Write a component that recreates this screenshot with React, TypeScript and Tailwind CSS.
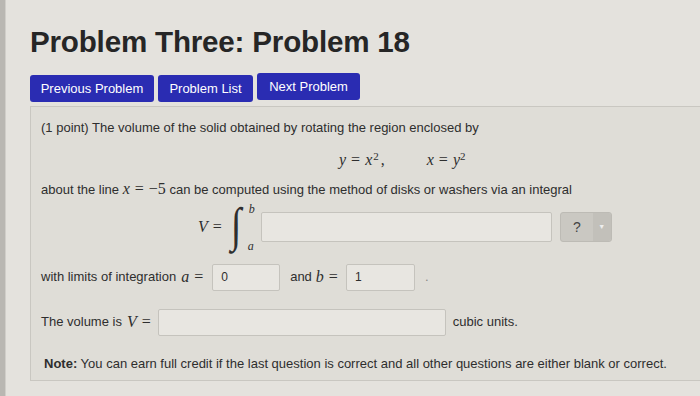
import React from "react";

const serif = { fontFamily: '"Liberation Serif", "Times New Roman", serif' };

function M({ children }: { children: React.ReactNode }) {
  return (
    <span className="italic text-[16px]" style={serif}>
      {children}
    </span>
  );
}

function Eq() {
  return (
    <span className="text-[16px] mx-[5px]" style={serif}>
      =
    </span>
  );
}

export default function App() {
  return (
    <div
      className="w-[700px] h-[396px] overflow-hidden flex bg-[#e4e2dd] text-[#2b2b2b]"
      style={{ fontFamily: '"Liberation Sans", Arial, sans-serif' }}
    >
      <div className="w-[6px] h-full bg-[#b9b7b2] border-r border-[#d0cec9]" />
      <div className="flex-1 flex flex-col pl-[24px] pt-[24px]">
        <h1 className="text-[29.6px] font-bold leading-[36px] text-[#262626] tracking-[-0.2px]">
          Problem Three: Problem 18
        </h1>
        <div className="flex gap-[4px] mt-[15px]">
          <button className="h-[27px] w-[124px] rounded-[3px] bg-[#2a2cb2] text-white text-[13px]">
            Previous Problem
          </button>
          <button className="h-[27px] w-[95px] rounded-[3px] bg-[#2a2cb2] text-white text-[13px]">
            Problem List
          </button>
          <button className="h-[27px] w-[103px] rounded-[3px] bg-[#2a2cb2] text-white text-[13px] -mt-[2px]">
            Next Problem
          </button>
        </div>
        <div className="mt-[4px] flex-1 mb-[15px] border border-[#c9c7c1] bg-[#dfddd7] pl-[10px] pt-[12px] text-[13px] text-[#2e2e2e] mr-[-10px]">
          <div className="leading-[18px]">
            (1 point) The volume of the solid obtained by rotating the region enclosed by
          </div>
          <div className="flex pl-[298px] mt-[13px] h-[20px] items-center">
            <M>y</M>
            <Eq />
            <M>
              x<sup className="text-[11px] not-italic ml-[1px]">2</sup>
            </M>
            <span className="text-[16px] ml-[2px]" style={serif}>,</span>
            <span className="w-[42px]" />
            <M>x</M>
            <Eq />
            <M>
              y<sup className="text-[11px] not-italic">2</sup>
            </M>
          </div>
          <div className="mt-[10px] leading-[18px]">
            about the line <M>x</M>
            <Eq />
            <span style={serif} className="text-[16px]">−5</span> can be computed using the method of disks or washers via an integral
          </div>
          <div className="flex items-center mt-[2px] h-[52px]">
            <div className="w-[157px]" />
            <M>V</M>
            <Eq />
            <div className="relative w-[30px] h-[52px] ml-[4px]">
              <span className="absolute left-[0px] top-[-2px] text-[48px] leading-[52px] scale-x-[0.8] origin-left" style={serif}>∫</span>
              <span className="absolute left-[18px] top-[-1px] text-[12px] italic" style={serif}>b</span>
              <span className="absolute left-[17px] top-[36px] text-[12px] italic" style={serif}>a</span>
            </div>
            <div className="w-[291px] h-[30px] border border-[#c5c3bd] rounded-[2px] bg-[#e8e6e1]" />
            <div className="ml-[8px] w-[52px] h-[30px] flex rounded-[3px] bg-[#cac8c2] border border-[#bdbbb5]">
              <div className="flex-1 flex items-center justify-center text-[14px] text-[#444]">?</div>
              <div className="w-[18px] flex items-center justify-center bg-[#c2c0ba] rounded-r-[3px] text-[7px] text-[#eee]">▼</div>
            </div>
          </div>
          <div className="flex items-center mt-[10px] h-[28px]">
            <span>with limits of integration</span>
            <span className="ml-[5px]"><M>a</M></span>
            <Eq />
            <div className="ml-[4px] w-[68px] h-[27px] border border-[#c5c3bd] rounded-[2px] bg-[#e8e6e1] pl-[8px] flex items-center text-[12px]">0</div>
            <span className="ml-[10px]">and</span>
            <span className="ml-[4px]"><M>b</M></span>
            <Eq />
            <div className="ml-[3px] w-[69px] h-[27px] border border-[#c5c3bd] rounded-[2px] bg-[#e8e6e1] pl-[8px] flex items-center text-[12px]">1</div>
            <span className="ml-[10px] text-[#888]">.</span>
          </div>
          <div className="flex items-center mt-[17px] h-[28px]">
            <span>The volume is</span>
            <span className="ml-[5px]"><M>V</M></span>
            <Eq />
            <div className="ml-[2px] w-[288px] h-[27px] border border-[#c5c3bd] rounded-[2px] bg-[#e8e6e1]" />
            <span className="ml-[7px]">cubic units.</span>
          </div>
          <div className="mt-[18px] pl-[3px]">
            <b>Note:</b> You can earn full credit if the last question is correct and all other questions are either blank or correct.
          </div>
        </div>
      </div>
    </div>
  );
}
